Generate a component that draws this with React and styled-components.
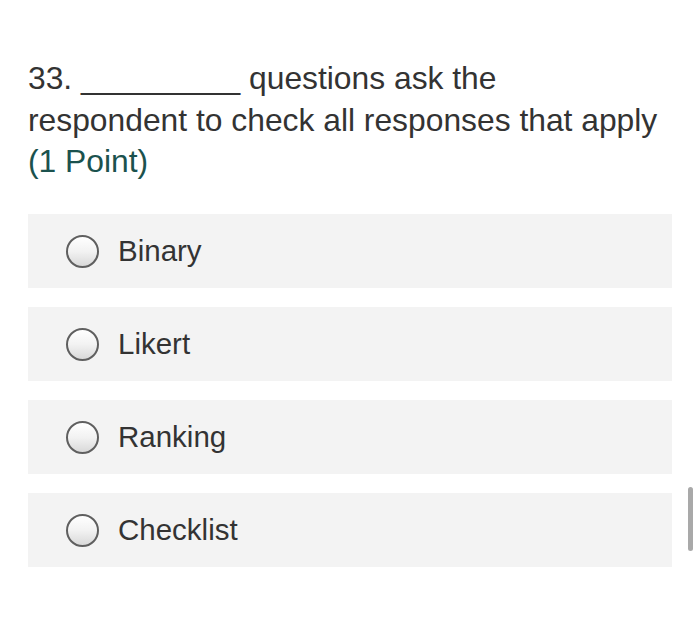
import React from "react";
import styled, { createGlobalStyle } from "styled-components";

const options = ["Binary", "Likert", "Ranking", "Checklist"];

export default function App() {
  return (
    <>
      <GlobalStyle />
      <Page>
        <Question>
          <QuestionLine>33. _________ questions ask the</QuestionLine>
          <QuestionLine>respondent to check all responses that apply</QuestionLine>
          <Points>(1 Point)</Points>
        </Question>
        <OptionList>
          {options.map(label => (
            <OptionRow key={label}>
              <Radio />
              <OptionLabel>{label}</OptionLabel>
            </OptionRow>
          ))}
        </OptionList>
        <ScrollThumb />
      </Page>
    </>
  );
}

const GlobalStyle = createGlobalStyle`
  html, body {
    margin: 0;
    padding: 0;
    background: #fff;
  }
  body {
    font-family: "Liberation Sans", Arial, sans-serif;
  }
`;

const Page = styled.main`
  position: relative;
  width: 700px;
  height: 643px;
  padding: 58px 28px 0 28px;
  box-sizing: border-box;
  overflow: hidden;
`;

const Question = styled.div`
  font-size: 31.8px;
  line-height: 41.5px;
  color: #333;
`;

const QuestionLine = styled.div`
  white-space: nowrap;
`;

const Points = styled.div`
  color: #1b524e;
`;

const OptionList = styled.div`
  display: flex;
  flex-direction: column;
  gap: 19px;
  margin-top: 31.5px;
`;

const OptionRow = styled.label`
  display: flex;
  align-items: center;
  height: 74px;
  padding-left: 38px;
  background: #f3f3f3;
`;

const Radio = styled.span`
  width: 29px;
  height: 29px;
  border-radius: 50%;
  border: 2px solid #5f5f5f;
  background: linear-gradient(180deg, #ffffff 0%, #f2f2f2 50%, #d9d9d9 100%);
  flex-shrink: 0;
`;

const OptionLabel = styled.span`
  margin-left: 19px;
  font-size: 29.5px;
  color: #333;
`;

const ScrollThumb = styled.div`
  position: absolute;
  left: 688px;
  top: 487px;
  width: 5px;
  height: 64px;
  border-radius: 3px;
  background: #a9a9a9;
`;
